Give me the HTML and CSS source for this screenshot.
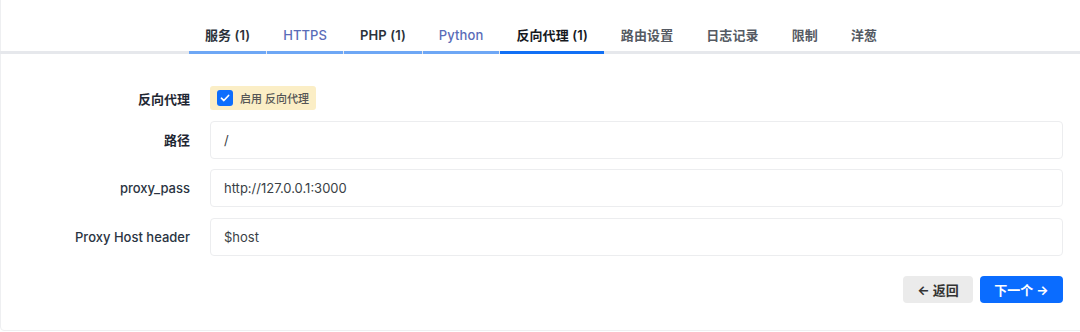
FILE: index.html
```html
<!DOCTYPE html>
<html lang="zh">
<head>
<meta charset="utf-8">
<link rel="stylesheet" href="styles.css">
</head>
<body>
<div class="card">
  <nav class="tabs">
    <div class="tab done dark">服务 (1)</div>
    <div class="tab done link">HTTPS</div>
    <div class="tab done dark">PHP (1)</div>
    <div class="tab done link">Python</div>
    <div class="tab active">反向代理 (1)</div>
    <div class="tab">路由设置</div>
    <div class="tab">日志记录</div>
    <div class="tab">限制</div>
    <div class="tab">洋葱</div>
  </nav>
  <form class="form">
    <div class="row row-check">
      <label class="label cjk">反向代理</label>
      <div class="field">
        <span class="check-pill">
          <span class="checkbox">
            <svg viewBox="0 0 16 16" width="12" height="12"><path d="M3.2 8.3 L6.5 11.4 L12.8 4.6" fill="none" stroke="#fff" stroke-width="2.2" stroke-linecap="round" stroke-linejoin="round"/></svg>
          </span>
          <span class="check-text">启用 反向代理</span>
        </span>
      </div>
    </div>
    <div class="row">
      <label class="label cjk">路径</label>
      <div class="field"><div class="input">/</div></div>
    </div>
    <div class="row">
      <label class="label">proxy_pass</label>
      <div class="field"><div class="input">http://127.0.0.1:3000</div></div>
    </div>
    <div class="row">
      <label class="label">Proxy Host header</label>
      <div class="field"><div class="input">$host</div></div>
    </div>
    <div class="actions">
      <button type="button" class="btn btn-back">← 返回</button>
      <button type="button" class="btn btn-next">下一个 →</button>
    </div>
  </form>
</div>
</body>
</html>
```

FILE: styles.css
```css
html, body {
  margin: 0;
  padding: 0;
  background: #ffffff;
  overflow: hidden;
}
body {
  width: 1080px;
  height: 332px;
  font-family: Inter, "Noto Sans CJK SC", sans-serif;
  color: #333;
}
.card {
  width: 1090px;
  height: 341px;
  margin-top: -10px;
  box-sizing: border-box;
  border: 1px solid #eeeff1;
  border-radius: 0 0 4px 4px;
  background: #fff;
}
.tabs {
  width: 1080px;
  margin-top: 25px;
  margin-left: -1px;
  padding-left: 2px;
  box-sizing: border-box;
  display: flex;
  justify-content: center;
  gap: 1px;
  border-bottom: 3px solid #e6e8ec;
}
.tab {
  padding: 10px 16px 7px;
  line-height: 18px;
  font-size: 13px;
  font-weight: 600;
  letter-spacing: 0.1px;
  color: #555a63;
  margin-bottom: -3px;
  border-bottom: 3px solid transparent;
  white-space: nowrap;
}
.tab.done {
  border-bottom-color: #6ea7f5;
}
.tab.dark {
  color: #2c323a;
}
.tab.link {
  color: #5a6cb8;
  font-weight: 500;
}
.tab.active {
  color: #16191e;
  border-bottom-color: #1170f5;
}
.form {
  width: 1079px;
  box-sizing: border-box;
  padding: 32px 17px 0 0;
  display: flex;
  flex-direction: column;
  gap: 10.5px;
}
.row {
  display: grid;
  grid-template-columns: 189px 1fr;
  column-gap: 20px;
  align-items: center;
}
.label {
  text-align: right;
  font-size: 13px;
  color: #2a3442;
  font-weight: 500;
}
.label.cjk {
  font-weight: 700;
  color: #1f2733;
}
.check-pill {
  display: inline-flex;
  align-items: center;
  gap: 7px;
  height: 24px;
  padding: 0 7px;
  background: #fbeec6;
  border-radius: 3px;
}
.checkbox {
  width: 16px;
  height: 16px;
  border-radius: 3px;
  background: #0d6efd;
  display: flex;
  align-items: center;
  justify-content: center;
}
.check-text {
  font-size: 11px;
  color: #555;
  font-weight: 500;
}
.input {
  height: 38px;
  box-sizing: border-box;
  border: 1px solid #ecedef;
  border-radius: 4px;
  padding: 0 13px;
  display: flex;
  align-items: center;
  font-size: 13px;
  color: #3a3f46;
}
.actions {
  display: flex;
  justify-content: flex-end;
  gap: 7px;
  margin-top: 9.5px;
}
.btn {
  height: 27px;
  border: none;
  border-radius: 4px;
  font-family: Inter, "Noto Sans CJK SC", sans-serif;
  font-size: 13px;
  font-weight: 700;
  padding: 0;
  cursor: pointer;
}
.btn-back {
  width: 70px;
  background: #ebebeb;
  color: #333;
}
.btn-next {
  width: 83px;
  background: #0a6cff;
  color: #fff;
}
```
